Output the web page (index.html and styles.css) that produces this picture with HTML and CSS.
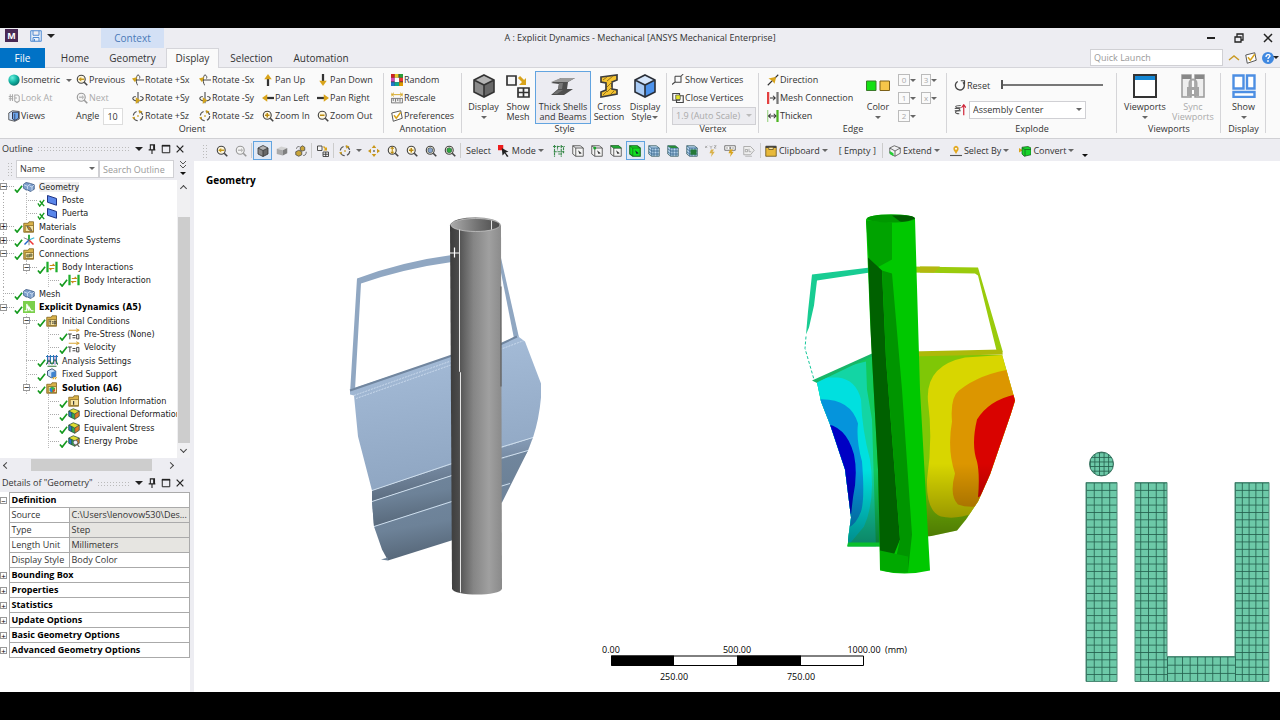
FILE: index.html
```html
<!DOCTYPE html>
<html lang="en">
<head>
<meta charset="utf-8">
<title>A : Explicit Dynamics - Mechanical</title>
<link rel="stylesheet" href="styles.css">
</head>
<body>

<svg class="defs" aria-hidden="true">
<symbol id="save" viewBox="0 0 16 16"><path d="M1 1h14v14H1zM4 1v6h8V1M4 15v-5h8v5M6 12v3" fill="#eaf2fc" stroke="#4a86d0" stroke-width="1.3"/></symbol>
<symbol id="ball" viewBox="0 0 16 16"><circle cx="8" cy="8" r="7.5" fill="url(#gBall)"/></symbol>
<symbol id="look" viewBox="0 0 16 16"><path d="M1 6h6M1 9h6M3 3v9M6 3v9M9 4h4l2 2v6l-3 2-3-2zM9 8h3" fill="none" stroke="#aaa" stroke-width="1.4"/></symbol>
<symbol id="views" viewBox="0 0 16 16"><path d="M1 4l5-3 9 1v10l-6 3-8-2z" fill="#cfe2fa" stroke="#333"/><path d="M6 3l8 0v8l-5 3-3-2z" fill="#6ba6ee" stroke="#223"/><path d="M6 3v9M9 5v9" stroke="#334"/></symbol>
<symbol id="mag" viewBox="0 0 16 16"><circle cx="7" cy="7" r="5.3" fill="#fdf6df" stroke="#444" stroke-width="1.5"/><path d="M11 11l4 4" stroke="#444" stroke-width="2.2"/></symbol>
<symbol id="magLeft" viewBox="0 0 16 16"><use href="#mag"/><path d="M3 7l4-3v2h4v2H7v2z" fill="#c79a1c"/></symbol>
<symbol id="magOff" viewBox="0 0 16 16"><circle cx="7" cy="7" r="5.3" fill="#f4f4f4" stroke="#999" stroke-width="1.5"/><path d="M11 11l4 4" stroke="#999" stroke-width="2.2"/><path d="M4 6h4V4l3 3-3 3V8H4z" fill="#bbb"/></symbol>
<symbol id="magPlus" viewBox="0 0 16 16"><use href="#mag"/><path d="M7 4v6M4 7h6" stroke="#b98a10" stroke-width="2"/></symbol>
<symbol id="magMinus" viewBox="0 0 16 16"><use href="#mag"/><path d="M4 7h6" stroke="#b98a10" stroke-width="2"/></symbol>
<symbol id="magFit" viewBox="0 0 16 16"><use href="#mag"/><path d="M7 3v8M5 5l2-2 2 2M5 9l2 2 2-2" fill="none" stroke="#b98a10" stroke-width="1.4"/></symbol>
<symbol id="magBlue" viewBox="0 0 16 16"><use href="#mag"/><path d="M4 5l3-1.500 3 1.500v4l-3 1.500L4 9z" fill="#8aa4cc" stroke="#456"/></symbol>
<symbol id="magGreen" viewBox="0 0 16 16"><use href="#mag"/><path d="M4 5l3-1.500 3 1.500v4l-3 1.500L4 9z" fill="#2faa3a" stroke="#365"/></symbol>
<symbol id="rotX" viewBox="0 0 16 16"><path d="M8 1c-3 1-3 13 0 14M8 1c2 1 3 3 2 5" fill="none" stroke="#444" stroke-width="1.3"/><path d="M3 8h13" stroke="#444" stroke-width="1.3"/><path d="M0 6l7-2-3 7z" fill="#d3a41c"/></symbol>
<symbol id="rotY" viewBox="0 0 16 16"><path d="M8 0v15M1 8c0 5 14 5 14 0-1-2-3-2-4-2M1 8c1-2 2-2 4-2" fill="none" stroke="#444" stroke-width="1.4"/><path d="M5 7l6 4-6 5z" fill="#d3a41c"/></symbol>
<symbol id="rotZ" viewBox="0 0 16 16"><circle cx="8" cy="8" r="6.300" fill="none" stroke="#555" stroke-width="1.5" stroke-dasharray="7 3"/><path d="M9 0l5 2-4 3zM7 7h2v2H7zM0 10l4-1-1 4z" fill="#c79a1c"/></symbol>
<symbol id="up" viewBox="0 0 16 16"><path d="M6.500 6h3v10h-3z" fill="#333"/><path d="M8 0l5 7H3z" fill="#d9a41b"/></symbol>
<symbol id="down" viewBox="0 0 16 16"><path d="M6.500 0h3v10h-3z" fill="#333"/><path d="M8 16l5-7H3z" fill="#d9a41b"/></symbol>
<symbol id="left" viewBox="0 0 16 16"><path d="M6 6.500h10v3H6z" fill="#333"/><path d="M0 8l7-5v10z" fill="#d9a41b"/></symbol>
<symbol id="right" viewBox="0 0 16 16"><path d="M0 6.500h10v3H0z" fill="#333"/><path d="M16 8l-7-5v10z" fill="#d9a41b"/></symbol>
<symbol id="random" viewBox="0 0 16 16"><path d="M0 0h16v16H0z" fill="#333"/><path d="M0 0h5v5H0z" fill="#c22"/><path d="M5 0h5v5H5z" fill="#e9c92a"/><path d="M11 0h5v5h-5z" fill="#2a9d3a"/><path d="M0 5h5v5H0z" fill="#d44bb4"/><path d="M5 5h6v6H5z" fill="#fff"/><path d="M11 5h5v5h-5z" fill="#e33"/><path d="M0 11h5v5H0z" fill="#27c"/><path d="M5 11h6v5H5z" fill="#1a8"/><path d="M11 11h5v5h-5z" fill="#d90"/></symbol>
<symbol id="rescale" viewBox="0 0 16 16"><path d="M0 1v5M16 1v5M1 3.500h14M4 1L1 3.500 4 6M12 1l3 2.500L12 6" fill="none" stroke="#d3a41c" stroke-width="1.2"/><path d="M.5 8.500h15v6H.5zM3 9v3M6 9v4M9 9v3M12 9v4" fill="#eee" stroke="#555"/></symbol>
<symbol id="prefs" viewBox="0 0 16 16"><path d="M1 4l12-3 2 10-12 4z" fill="#fff" stroke="#555" stroke-width="1.3"/><path d="M4 7l3 4 6-8" fill="none" stroke="#d9a41b" stroke-width="2"/></symbol>
<symbol id="cubeGrey" viewBox="0 0 24 24"><path d="M12 1l10 5-10 5L2 6z" fill="#b4b4b4"/><path d="M2 6l10 5v12L2 18z" fill="#8a8a8a"/><path d="M22 6l-10 5v12l10-5z" fill="#686868"/><path d="M12 1l10 5v12l-10 5-10-5V6zM2 6l10 5 10-5M12 11v12" fill="none" stroke="#333" stroke-width="1.6"/></symbol>
<symbol id="cubeBlue" viewBox="0 0 24 24"><path d="M12 1l10 5-10 5L2 6z" fill="#d5e6fb"/><path d="M2 6l10 5v12L2 18z" fill="#a9cbf5"/><path d="M22 6l-10 5v12l10-5z" fill="#4d93ec"/><path d="M12 1l10 5v12l-10 5-10-5V6zM2 6l10 5 10-5M12 11v12" fill="none" stroke="#2a2f38" stroke-width="1.6"/></symbol>
<symbol id="mesh" viewBox="0 0 24 24"><path d="M1 2h9v9H1zM12 14h11v9H12zM17.500 14v9M12 18.500h11" fill="#f6f6f6" stroke="#333" stroke-width="1.7"/><path d="M13 3l5 5" stroke="#d9a41b" stroke-width="3"/><path d="M20 4v7h-7z" fill="#d9a41b"/></symbol>
<symbol id="beam" viewBox="0 0 24 24"><path d="M0 9l10-5h14l-7 4-1 7h6l-9 6H0l7-6 1-5z" fill="#4e4e4e"/><path d="M0 8l10-4h14l-7 4z" fill="#9a9a9a"/><path d="M8 9h4l-1 6H7z" fill="#777"/><path d="M7 16h5l-6 4H2z" fill="#707070"/></symbol>
<symbol id="ibeam" viewBox="0 0 24 24"><path d="M4 3l16-2v5l-5 2v7l5 1v4L4 23v-5l5-2V9L4 8z" fill="#f5c330" stroke="#3d3d3d" stroke-width="1.7"/><path d="M6 6l4-3M10 7l6-5M10 13l5-5M10 18l5-5M6 21l4-4M13 21l4-4" stroke="#96741a"/></symbol>
<symbol id="vert" viewBox="0 0 16 16"><path d="M4 3h8v8H4M4 3v8M0 14l5-4M12 3l3-3" fill="none" stroke="#444" stroke-width="1.4"/></symbol>
<symbol id="closeV" viewBox="0 0 16 16"><path d="M1 2h9v9H1zM6 5h9v9H6z" fill="none" stroke="#444" stroke-width="1.5"/><path d="M5 4h6v6H5z" fill="#e5e622" stroke="#555"/></symbol>
<symbol id="dir" viewBox="0 0 16 16"><path d="M1 15L15 1" stroke="#333" stroke-width="1.5"/><path d="M2 6l9-2 1 1-2 8-3-4z" fill="#d9a41b"/></symbol>
<symbol id="conn" viewBox="0 0 16 16"><path d="M1.500 0v16" stroke="#e34040" stroke-width="3"/><path d="M14 0v16" stroke="#777" stroke-width="3"/><path d="M4 8h7M8 5l3 3-3 3" fill="none" stroke="#333" stroke-width="1.4"/></symbol>
<symbol id="thick" viewBox="0 0 16 16"><path d="M1 0v16" stroke="#6cc04a"/><path d="M14 0v16" stroke="#4eb522" stroke-width="3"/><path d="M2 8h9M5 5L2 8l3 3M9 5l3 3-3 3" fill="none" stroke="#333" stroke-width="1.4"/></symbol>
<symbol id="reset" viewBox="0 0 16 16"><path d="M5 2a6 6 0 1 0 7 1" fill="none" stroke="#444" stroke-width="1.8"/><path d="M9 1h5v5" fill="none" stroke="#444" stroke-width="1.6"/></symbol>
<symbol id="explode" viewBox="0 0 16 16"><path d="M9 2c-9 0-9 3 0 3M1 6c9-1 9 3 0 3M9 9c-9 0-9 4-2 4" fill="none" stroke="#555" stroke-width="1.4"/><path d="M13 2v13M10 5l3-4 3 4" fill="none" stroke="#cf2438" stroke-width="1.6"/></symbol>
<symbol id="viewports" viewBox="0 0 24 24"><path d="M1 1h22v22H1z" fill="#fff" stroke="#333" stroke-width="2"/><path d="M2 2h20v4H2z" fill="#1487d4"/></symbol>
<symbol id="sync" viewBox="0 0 24 24"><path d="M1 1h9v22H1zM14 1h9v22h-9z" fill="#eee" stroke="#999" stroke-width="1.5"/><path d="M1 1h9v4H1zM14 1h9v4h-9z" fill="#888"/><path d="M6 13h12v9H6z" fill="#a5a5a5"/><path d="M8.500 13V9a3.500 3.500 0 0 1 7 0v4" fill="none" stroke="#a5a5a5" stroke-width="2"/><path d="M12 16v4" stroke="#fff" stroke-width="2"/></symbol>
<symbol id="show" viewBox="0 0 24 24"><path d="M1.500 1.500h10v13h-10zM15 1.500h7.500v13H15zM1.500 18h21v5h-21z" fill="#fff" stroke="#4d8fe3" stroke-width="2.4"/></symbol>
<symbol id="swatch" viewBox="0 0 24 24"><path d="M.5 7h9.500v9.500H.5z" fill="#13e013" stroke="#3a7a2a"/><path d="M14 7h9.500v9.500H14z" fill="#f5c64a" stroke="#7c6018"/></symbol>
<symbol id="check" viewBox="0 0 10 10"><path d="M1 6l2.500 3L9 2" fill="none" stroke="#149a1e" stroke-width="1.8"/></symbol>
<symbol id="cross" viewBox="0 0 10 10"><path d="M1 6l2 3 5-7M3 3l5 6" fill="none" stroke="#149a1e" stroke-width="1.5"/></symbol>
<symbol id="geom" viewBox="0 0 16 16"><path d="M0 5l4-3 5 1 6 2v6l-5 3-4-2H4l-4-3z" fill="#7e9fcb" stroke="#33507c"/><path d="M1 5l5 2v4M6 7l4-3M9 7l3 1v5M12 8l3-3" fill="none" stroke="#dce8f8"/></symbol>
<symbol id="surf" viewBox="0 0 16 16"><path d="M2 2l12 4v9L2 11z" fill="#5a86ea" stroke="#1c2f80" stroke-width="1.3"/></symbol>
<symbol id="folder" viewBox="0 0 16 16"><path d="M1 3h6l1-2h6v14H1z" fill="#d9b24a" stroke="#7b5d15"/><path d="M3 6h11v8H3z" fill="#f6e3a0" stroke="#8a6a20"/></symbol>
<symbol id="mat" viewBox="0 0 16 16"><use href="#folder"/><path d="M5 7l4 1 3 5-4-1z" fill="#c88a20" stroke="#555"/></symbol>
<symbol id="conns" viewBox="0 0 16 16"><use href="#folder"/><path d="M5 9h4v3H5zM9 8h3v3H9z" fill="#aaa14a" stroke="#665"/></symbol>
<symbol id="init" viewBox="0 0 16 16"><use href="#folder"/><path d="M4 8h3M5.500 8v5M8 9h2M8 11h2M11 8h2v4h-2z" fill="none" stroke="#222"/></symbol>
<symbol id="sol" viewBox="0 0 16 16"><use href="#folder"/><path d="M5 8l3-2 4 2v4l-4 2-3-2z" fill="#35b04b"/><path d="M5 8l3 1v5l-3-2z" fill="#2c7be0"/><path d="M9 11l3-2v3l-3 2z" fill="#e04a2a"/></symbol>
<symbol id="info" viewBox="0 0 16 16"><use href="#folder"/><path d="M7.500 8v5" stroke="#333" stroke-width="1.500"/></symbol>
<symbol id="coord" viewBox="0 0 16 16"><path d="M8 8V1" stroke="#22a83a" stroke-width="2.500"/><path d="M8 8l7-3" stroke="#36b8d8" stroke-width="1.500"/><path d="M8 8l6 6" stroke="#e33" stroke-width="2"/><path d="M8 8l-6 6" stroke="#26c" stroke-width="2"/><path d="M8 8L1 5M8 8v7" stroke="#666"/></symbol>
<symbol id="body" viewBox="0 0 16 16"><path d="M2 1v14M14 1v14" stroke="#1eae2c" stroke-width="3"/><path d="M5 6h6L9 4M11 10H5l2 2" fill="none" stroke="#c98a1a" stroke-width="1.500"/></symbol>
<symbol id="explicit" viewBox="0 0 16 16"><path d="M0 0h16v16H0z" fill="#7bd04c"/><path d="M2 13h3V4l3 9V8l3 5h3" fill="none" stroke="#fff" stroke-width="1.500"/></symbol>
<symbol id="t0" viewBox="0 0 16 16"><path d="M1 3h13M11 1l4 2-4 2" fill="none" stroke="#d19a20" stroke-width="1.200"/><path d="M0 8h5M2.500 8v7M6 10h4M6 13h4M11.500 8.500h3v6h-3z" fill="none" stroke="#333" stroke-width="1.200"/></symbol>
<symbol id="analysis" viewBox="0 0 16 16"><path d="M0 2h16M2 0v12M6 0v12M10 0v12M14 0v12" stroke="#2878b8" stroke-width="1.400"/><path d="M0 13l4-6 4 5 4-6 4 7M2 15h12" fill="none" stroke="#347a3a" stroke-width="1.400"/><path d="M4 1v12M12 1v12" stroke="#8a53b0"/></symbol>
<symbol id="fixed" viewBox="0 0 16 16"><path d="M2 4l6-3 5 3v7l-6 2-5-3z" fill="#c8e0fa" stroke="#33466a" stroke-width="1.200"/><path d="M7 6l6-2v7l-6 2z" fill="#3f83cf"/><path d="M9 15l2-3M12 15l2-3" stroke="#d9a41b" stroke-width="1.500"/></symbol>
<symbol id="result" viewBox="0 0 16 16"><path d="M1 4l6-3 8 3-6 4z" fill="#dfdc30"/><path d="M1 4l8 4v7l-8-4z" fill="#2eae4c"/><path d="M15 4L9 8v7l6-4z" fill="#de7a25"/><path d="M1 4l4 2v7l-4-2z" fill="#2776cc"/><path d="M1 4l6-3 8 3v7l-6 4-8-4zM1 4l8 4 6-4M9 8v7M5 6v7" fill="none" stroke="#2b4d3a"/></symbol>
<symbol id="probe" viewBox="0 0 16 16"><use href="#result"/><circle cx="10" cy="10" r="3" fill="#eef" stroke="#555"/><path d="M12 12l3 4" stroke="#555" stroke-width="1.500"/></symbol>
<symbol id="box" viewBox="0 0 16 16"><path d="M1 5l6-3 8 2-6 3z" fill="#d2d2d2"/><path d="M1 5l8 2v7l-8-2z" fill="#aaa"/><path d="M15 4L9 7v7l6-3z" fill="#808080"/></symbol>
<symbol id="swap" viewBox="0 0 16 16"><path d="M1 9l4-2 4 2v4l-4 2-4-2zM7 3l3-2 3 2v4l-3 1-3-1z" fill="#c9a53a" stroke="#444"/><path d="M2 5c0-3 3-3 4-3M15 9c0 4-2 5-4 5" fill="none" stroke="#444"/></symbol>
<symbol id="pan" viewBox="0 0 16 16"><path d="M8 0l3 4H5zM8 16l3-4H5zM0 8l4-3v6zM16 8l-4-3v6z" fill="#c9971a"/><path d="M7 7h2v2H7z" fill="#444"/></symbol>
<symbol id="cursor" viewBox="0 0 16 16"><path d="M0 0h7v7H0z" fill="#ee1c1c"/><path d="M5 4l9 5-4 1 4 5-2 1-3-5-3 3z" fill="#222"/></symbol>
<symbol id="pts" viewBox="0 0 16 16"><path d="M2 0v16M6 1v6M11 0v16M0 2h16M1 9h15M7 12h3M14 3v8" fill="none" stroke="#3b8a4c" stroke-width="1.500" stroke-dasharray="4 1"/></symbol>
<symbol id="wire" viewBox="0 0 16 16"><path d="M1 1h10l4 3v11H5L1 12zM1 1l4 3h10M5 4v11" fill="#f5f5f5" stroke="#555" stroke-width="1.200"/><path d="M8 7l5 4-3 1z" fill="#333"/></symbol>
<symbol id="selV" viewBox="0 0 16 16"><use href="#wire"/><circle cx="5" cy="4" r="2" fill="#19a52a"/></symbol>
<symbol id="selE" viewBox="0 0 16 16"><use href="#wire"/><path d="M1 1l4 3h10l-3-3z" fill="#22b936" stroke="#1a6d26"/></symbol>
<symbol id="selB" viewBox="0 0 16 16"><path d="M1 1h10l4 3v11H5L1 12z" fill="#10e022" stroke="#186820" stroke-width="1.400"/><path d="M1 1l4 3h10M5 4v11" fill="none" stroke="#186820"/><path d="M8 7l5 4-3 1z" fill="#123"/></symbol>
<symbol id="grid" viewBox="0 0 16 16"><path d="M1 1h10l4 3v11H5L1 12z" fill="#b9d7f0" stroke="#355"/><path d="M1 1l4 3h10M5 4v11M8 4v11M12 4v11M5 8h10M5 12h10M1 5l4 3M1 9l4 3" fill="none" stroke="#2c5c84"/></symbol>
<symbol id="gridT" viewBox="0 0 16 16"><use href="#grid"/><path d="M1 1h10l4 3H5z" fill="#278a38"/></symbol>
<symbol id="gridF" viewBox="0 0 16 16"><use href="#grid"/><path d="M6 6h8v7H6z" fill="#247a38"/></symbol>
<symbol id="xyz" viewBox="0 0 16 16"><path d="M0 1l3 3M3 1L0 4M6 1l2 2 2-2M8 3v2M12 1h3l-3 3h3" fill="none" stroke="#999"/><path d="M8 6l-2 5h3l-1 5 5-7h-3l2-3z" fill="#d9b14a"/></symbol>
<symbol id="tag" viewBox="0 0 16 16"><path d="M1 1h14v6H1zM4 3v2M7 3h2v2H7M12 3v2" fill="#fff" stroke="#666" stroke-width="1.200"/><path d="M8 6l-2 5h3l-1 5 5-7h-3l2-3z" fill="#d9a41b"/></symbol>
<symbol id="label" viewBox="0 0 16 16"><path d="M1 2h9l5 5-5 6H1zM3 6h3v3H3zM8 5v4h3" fill="#eee" stroke="#999"/><path d="M3 15h9" stroke="#aaa"/></symbol>
<symbol id="clip" viewBox="0 0 16 16"><path d="M1 2h14v13H1z" fill="#e8b93a" stroke="#5d4a14"/><path d="M1 1h14v3H1z" fill="#444"/><path d="M5 3h6v3H5z" fill="#f8e9b8" stroke="#5d4a14"/></symbol>
<symbol id="extend" viewBox="0 0 16 16"><path d="M1 4l6-3 8 3v7l-7 4-7-4zM1 4l7 4 7-4M8 8v7" fill="#f3f3f3" stroke="#444"/><path d="M1 8l5 3v4l-5-3z" fill="#23cf34"/></symbol>
<symbol id="pin" viewBox="0 0 16 16"><path d="M8 1a4 4 0 0 1 3 6l-3 5-3-5a4 4 0 0 1 3-6z" fill="#e3a922"/><circle cx="8" cy="5" r="1.300" fill="#fff"/><path d="M0 14h16" stroke="#555" stroke-width="1.500"/></symbol>
<symbol id="convert" viewBox="0 0 16 16"><path d="M0 4l5 3-5 3z" fill="#d9a41b"/><path d="M4 3l8-1 4 2v9l-9 2-3-3z" fill="#17d42b" stroke="#17601f"/><path d="M4 4l4 2h8M8 6v9" fill="none" stroke="#17601f"/></symbol>
<symbol id="pinH" viewBox="0 0 12 12"><path d="M4 1h5v6H4zM8 1v6M2 7h8M6 7v5" fill="none" stroke="#222" stroke-width="1.300"/></symbol>
<symbol id="max" viewBox="0 0 12 12"><path d="M1.500 2h9v8.500h-9z" fill="none" stroke="#222" stroke-width="1.200"/><path d="M1 2h10" stroke="#222" stroke-width="2"/></symbol>
<symbol id="x" viewBox="0 0 12 12"><path d="M2 2l8 8M10 2l-8 8" stroke="#222" stroke-width="1.500"/></symbol>
<symbol id="restore" viewBox="0 0 12 12"><path d="M2 5h6v5H2zM4 5V2h6v6H8" fill="none" stroke="#222" stroke-width="1.300"/></symbol>
<radialGradient id="gBall" cx=".35" cy=".3" r=".8"><stop offset="0" stop-color="#6ff0e0"/><stop offset=".5" stop-color="#12b5a4"/><stop offset="1" stop-color="#056a66"/></radialGradient>
</svg>

<div class="app">

<header class="top">
  <div class="title_bar">
    <div class="quick"><span class="logo">M</span><button aria-label="Save"><svg class="ic"><use href="#save"/></svg></button><i class="caret big"></i></div>
    <div class="ctx">Context</div>
    <div class="title">A : Explicit Dynamics - Mechanical [ANSYS Mechanical Enterprise]</div>
    <div class="win">
      <button aria-label="Minimize"><i class="dash"></i></button>
      <button aria-label="Restore"><svg class="ic"><use href="#restore"/></svg></button>
      <button aria-label="Close"><svg class="ic"><use href="#x"/></svg></button>
    </div>
  </div>
  <nav class="tabs">
    <button class="tab file">File</button>
    <button class="tab t_home">Home</button>
    <button class="tab t_geo">Geometry</button>
    <button class="tab on">Display</button>
    <button class="tab t_sel">Selection</button>
    <button class="tab t_auto">Automation</button>
    <div class="launch">
      <input type="text" placeholder="Quick Launch" aria-label="Quick Launch">
      <svg class="ic" viewBox="0 0 12 12"><path d="M1 8l5-4 5 4" fill="none" stroke="#c99a25" stroke-width="1.500"/></svg>
      <svg class="ic"><use href="#prefs"/></svg>
      <svg class="ic" viewBox="0 0 12 12"><circle cx="6" cy="6" r="6" fill="#3f88e0"/><path d="M4 5c0-3 4-3 4-1 0 1-2 1-2 3M6 8v2" fill="none" stroke="#fff" stroke-width="1.300"/></svg><i class="caret"></i>
    </div>
  </nav>
</header>

<div class="ribbon">
  <section class="grp g_orient">
    <div class="cmds">
      <div class="col">
        <button class="cmd"><svg class="ic"><use href="#ball"/></svg>Isometric<i class="caret far"></i></button>
        <button class="cmd off"><svg class="ic"><use href="#look"/></svg>Look At</button>
        <button class="cmd"><svg class="ic"><use href="#views"/></svg>Views</button>
      </div>
      <div class="col">
        <button class="cmd"><svg class="ic"><use href="#magLeft"/></svg>Previous</button>
        <button class="cmd off"><svg class="ic"><use href="#magOff"/></svg>Next</button>
        <label class="cmd angle">Angle<input type="text" value="10"></label>
      </div>
      <div class="col">
        <button class="cmd"><svg class="ic"><use href="#rotX"/></svg>Rotate +Sx</button>
        <button class="cmd"><svg class="ic"><use href="#rotY"/></svg>Rotate +Sy</button>
        <button class="cmd"><svg class="ic"><use href="#rotZ"/></svg>Rotate +Sz</button>
      </div>
      <div class="col">
        <button class="cmd"><svg class="ic"><use href="#rotX"/></svg>Rotate -Sx</button>
        <button class="cmd"><svg class="ic"><use href="#rotY"/></svg>Rotate -Sy</button>
        <button class="cmd"><svg class="ic"><use href="#rotZ"/></svg>Rotate -Sz</button>
      </div>
      <div class="col">
        <button class="cmd"><svg class="ic"><use href="#up"/></svg>Pan Up</button>
        <button class="cmd"><svg class="ic"><use href="#left"/></svg>Pan Left</button>
        <button class="cmd"><svg class="ic"><use href="#magPlus"/></svg>Zoom In</button>
      </div>
      <div class="col">
        <button class="cmd"><svg class="ic"><use href="#down"/></svg>Pan Down</button>
        <button class="cmd"><svg class="ic"><use href="#right"/></svg>Pan Right</button>
        <button class="cmd"><svg class="ic"><use href="#magMinus"/></svg>Zoom Out</button>
      </div>
    </div>
    <div class="cap">Orient</div>
  </section>

  <section class="grp g_annot">
    <div class="cmds"><div class="col">
      <button class="cmd"><svg class="ic"><use href="#random"/></svg>Random</button>
      <button class="cmd"><svg class="ic"><use href="#rescale"/></svg>Rescale</button>
      <button class="cmd"><svg class="ic"><use href="#prefs"/></svg>Preferences</button>
    </div></div>
    <div class="cap">Annotation</div>
  </section>

  <section class="grp g_style">
    <div class="cmds">
      <button class="big_cmd"><svg class="ic24"><use href="#cubeGrey"/></svg><span>Display</span><i class="caret"></i></button>
      <button class="big_cmd"><svg class="ic24"><use href="#mesh"/></svg><span>Show<br>Mesh</span></button>
      <button class="big_cmd sel"><svg class="ic24"><use href="#beam"/></svg><span>Thick Shells<br>and Beams</span></button>
      <button class="big_cmd"><svg class="ic24"><use href="#ibeam"/></svg><span>Cross<br>Section</span></button>
      <button class="big_cmd"><svg class="ic24"><use href="#cubeBlue"/></svg><span>Display<br>Style<i class="caret"></i></span></button>
    </div>
    <div class="cap">Style</div>
  </section>

  <section class="grp g_vertex">
    <div class="cmds"><div class="col">
      <button class="cmd"><svg class="ic"><use href="#vert"/></svg>Show Vertices</button>
      <button class="cmd"><svg class="ic"><use href="#closeV"/></svg>Close Vertices</button>
      <div class="drop off"><select disabled aria-label="Vertex scale"><option>1.9 (Auto Scale)</option></select></div>
    </div></div>
    <div class="cap">Vertex</div>
  </section>

  <section class="grp g_edge">
    <div class="cmds">
      <div class="col">
        <button class="cmd"><svg class="ic"><use href="#dir"/></svg>Direction</button>
        <button class="cmd"><svg class="ic"><use href="#conn"/></svg>Mesh Connection</button>
        <button class="cmd"><svg class="ic"><use href="#thick"/></svg>Thicken</button>
      </div>
      <button class="big_cmd"><svg class="ic24"><use href="#swatch"/></svg><span>Color</span><i class="caret"></i></button>
      <div class="minis">
        <button><b>0</b><i class="caret"></i></button><button><b>3</b><i class="caret"></i></button>
        <button><b>1</b><i class="caret"></i></button><button><b>x</b><i class="caret"></i></button>
        <button><b>2</b><i class="caret"></i></button>
      </div>
    </div>
    <div class="cap">Edge</div>
  </section>

  <section class="grp g_explode">
    <div class="cmds">
      <div class="ex_row"><button class="cmd"><svg class="ic"><use href="#reset"/></svg>Reset</button><input type="range" value="0" aria-label="Explode factor"></div>
      <div class="ex_row"><svg class="ic"><use href="#explode"/></svg><div class="drop"><select aria-label="Explode origin"><option>Assembly Center</option></select></div></div>
    </div>
    <div class="cap">Explode</div>
  </section>

  <section class="grp g_views">
    <div class="cmds">
      <button class="big_cmd"><svg class="ic24"><use href="#viewports"/></svg><span>Viewports</span><i class="caret"></i></button>
      <button class="big_cmd off"><svg class="ic24"><use href="#sync"/></svg><span>Sync<br>Viewports</span></button>
    </div>
    <div class="cap">Viewports</div>
  </section>

  <section class="grp g_show">
    <div class="cmds"><button class="big_cmd"><svg class="ic24"><use href="#show"/></svg><span>Show</span><i class="caret"></i></button></div>
    <div class="cap">Display</div>
  </section>
</div>

<div class="main">

<aside class="side">
  <div class="pane_hdr"><span>Outline</span><i class="grip"></i><i class="caret big"></i><svg class="ic"><use href="#pinH"/></svg><svg class="ic"><use href="#max"/></svg><svg class="ic"><use href="#x"/></svg></div>
  <div class="filter">
    <i class="grip_v"></i>
    <div class="drop"><select aria-label="Filter by"><option>Name</option></select></div>
    <input type="text" placeholder="Search Outline" aria-label="Search Outline">
    <svg class="more" viewBox="0 0 10 18"><path d="M2 1l3 3 3-3M2 5l3 3 3-3" fill="none" stroke="#555"/><path d="M2 12h6l-3 3z" fill="#111"/></svg>
  </div>
  <div class="outline">
    <ul class="tree">
      <li class="root"><button class="tog">−</button><i class="ln"></i><svg class="ck"><use href="#check"/></svg><svg class="ti"><use href="#geom"/></svg><span class="hl">Geometry</span></li>
      <li class="root l1 leaf"><i class="ln"></i><svg class="ck"><use href="#cross"/></svg><svg class="ti"><use href="#surf"/></svg><span>Poste</span></li>
      <li class="root l1 leaf"><i class="ln"></i><svg class="ck"><use href="#cross"/></svg><svg class="ti"><use href="#surf"/></svg><span>Puerta</span></li>
      <li class="root"><button class="tog">+</button><i class="ln"></i><svg class="ck"><use href="#check"/></svg><svg class="ti"><use href="#mat"/></svg><span>Materials</span></li>
      <li class="root"><button class="tog">+</button><i class="ln"></i><svg class="ck"><use href="#check"/></svg><svg class="ti"><use href="#coord"/></svg><span>Coordinate Systems</span></li>
      <li class="root"><button class="tog">−</button><i class="ln"></i><svg class="ck"><use href="#check"/></svg><svg class="ti"><use href="#conns"/></svg><span>Connections</span></li>
      <li class="root l1"><button class="tog">−</button><i class="ln"></i><svg class="ck"><use href="#check"/></svg><svg class="ti"><use href="#body"/></svg><span>Body Interactions</span></li>
      <li class="root l2 leaf"><i class="ln"></i><svg class="ck"><use href="#check"/></svg><svg class="ti"><use href="#body"/></svg><span>Body Interaction</span></li>
      <li class="root leaf"><i class="ln"></i><svg class="ck"><use href="#check"/></svg><svg class="ti"><use href="#geom"/></svg><span>Mesh</span></li>
      <li class="root"><button class="tog">−</button><i class="ln"></i><svg class="ck"><use href="#check"/></svg><svg class="ti"><use href="#explicit"/></svg><span class="b">Explicit Dynamics (A5)</span></li>
      <li class="l1"><button class="tog">−</button><i class="ln"></i><svg class="ck"><use href="#check"/></svg><svg class="ti"><use href="#init"/></svg><span>Initial Conditions</span></li>
      <li class="l2 leaf thru"><i class="ln"></i><svg class="ck"><use href="#check"/></svg><svg class="ti"><use href="#t0"/></svg><span>Pre-Stress (None)</span></li>
      <li class="l2 leaf thru"><i class="ln"></i><svg class="ck"><use href="#check"/></svg><svg class="ti"><use href="#t0"/></svg><span>Velocity</span></li>
      <li class="l1 leaf"><i class="ln"></i><svg class="ck"><use href="#check"/></svg><svg class="ti"><use href="#analysis"/></svg><span>Analysis Settings</span></li>
      <li class="l1 leaf"><i class="ln"></i><svg class="ck"><use href="#check"/></svg><svg class="ti"><use href="#fixed"/></svg><span>Fixed Support</span></li>
      <li class="l1"><button class="tog">−</button><i class="ln"></i><svg class="ck"><use href="#check"/></svg><svg class="ti"><use href="#sol"/></svg><span class="b">Solution (A6)</span></li>
      <li class="l2 leaf"><i class="ln"></i><svg class="ck"><use href="#check"/></svg><svg class="ti"><use href="#info"/></svg><span>Solution Information</span></li>
      <li class="l2 leaf"><i class="ln"></i><svg class="ck"><use href="#check"/></svg><svg class="ti"><use href="#result"/></svg><span>Directional Deformation</span></li>
      <li class="l2 leaf"><i class="ln"></i><svg class="ck"><use href="#check"/></svg><svg class="ti"><use href="#result"/></svg><span>Equivalent Stress</span></li>
      <li class="l2 leaf"><i class="ln"></i><svg class="ck"><use href="#check"/></svg><svg class="ti"><use href="#probe"/></svg><span>Energy Probe</span></li>
    </ul>
    <div class="vbar"><i class="chev u"></i><i class="thumb"></i><i class="chev d"></i></div>
  </div>
  <div class="hbar"><i class="chev l"></i><i class="thumb"></i><i class="chev r"></i></div>

  <div class="pane_hdr"><span>Details of "Geometry"</span><i class="grip"></i><i class="caret big"></i><svg class="ic"><use href="#pinH"/></svg><svg class="ic"><use href="#max"/></svg><svg class="ic"><use href="#x"/></svg></div>
  <table class="props">
    <colgroup><col class="c_gut"><col class="c_key"><col></colgroup>
    <tr><td class="gut"><button class="tog">−</button></td><th colspan="2">Definition</th></tr>
    <tr><td class="gut"></td><td>Source</td><td class="ro">C:\Users\lenovow530\Des...</td></tr>
    <tr><td class="gut"></td><td>Type</td><td class="ro">Step</td></tr>
    <tr><td class="gut"></td><td>Length Unit</td><td class="ro">Millimeters</td></tr>
    <tr><td class="gut"></td><td>Display Style</td><td>Body Color</td></tr>
    <tr><td class="gut"><button class="tog">+</button></td><th colspan="2">Bounding Box</th></tr>
    <tr><td class="gut"><button class="tog">+</button></td><th colspan="2">Properties</th></tr>
    <tr><td class="gut"><button class="tog">+</button></td><th colspan="2">Statistics</th></tr>
    <tr><td class="gut"><button class="tog">+</button></td><th colspan="2">Update Options</th></tr>
    <tr><td class="gut"><button class="tog">+</button></td><th colspan="2">Basic Geometry Options</th></tr>
    <tr><td class="gut"><button class="tog">+</button></td><th colspan="2">Advanced Geometry Options</th></tr>
  </table>
</aside>

<div class="work">
  <div class="tools">
    <i class="grip_v"></i>
    <button><svg class="ic"><use href="#magLeft"/></svg></button>
    <button><svg class="ic"><use href="#magOff"/></svg></button>
    <i class="sep"></i>
    <button class="sel"><svg class="ic"><use href="#cubeGrey"/></svg></button>
    <button><svg class="ic"><use href="#box"/></svg></button>
    <button><svg class="ic"><use href="#swap"/></svg></button>
    <i class="sep"></i>
    <button><svg class="ic"><use href="#mesh"/></svg></button>
    <i class="sep"></i>
    <button><svg class="ic"><use href="#rotZ"/></svg></button>
    <i class="caret mid"></i>
    <button><svg class="ic"><use href="#pan"/></svg></button>
    <button><svg class="ic"><use href="#magFit"/></svg></button>
    <button><svg class="ic"><use href="#magPlus"/></svg></button>
    <button><svg class="ic"><use href="#magBlue"/></svg></button>
    <button><svg class="ic"><use href="#magGreen"/></svg></button>
    <i class="sep"></i>
    <span class="t_select">Select</span>
    <button class="txt t_mode"><svg class="ic"><use href="#cursor"/></svg>Mode<i class="caret"></i></button>
    <button><svg class="ic"><use href="#pts"/></svg></button>
    <button><svg class="ic"><use href="#wire"/></svg></button>
    <button><svg class="ic"><use href="#selV"/></svg></button>
    <button><svg class="ic"><use href="#selE"/></svg></button>
    <button class="sel"><svg class="ic"><use href="#selB"/></svg></button>
    <button><svg class="ic"><use href="#grid"/></svg></button>
    <button><svg class="ic"><use href="#gridT"/></svg></button>
    <button><svg class="ic"><use href="#gridF"/></svg></button>
    <button><svg class="ic"><use href="#xyz"/></svg></button>
    <button><svg class="ic"><use href="#tag"/></svg></button>
    <button><svg class="ic"><use href="#label"/></svg></button>
    <i class="sep"></i>
    <button class="txt t_clip"><svg class="ic"><use href="#clip"/></svg>Clipboard<i class="caret"></i></button>
    <span class="t_empty">[ Empty ]</span>
    <i class="sep"></i>
    <button class="txt t_ext"><svg class="ic"><use href="#extend"/></svg>Extend<i class="caret"></i></button>
    <button class="txt t_by"><svg class="ic"><use href="#pin"/></svg>Select By<i class="caret"></i></button>
    <button class="txt t_conv"><svg class="ic"><use href="#convert"/></svg>Convert<i class="caret"></i></button>
    <i class="caret over"></i>
  </div>

  <div class="view">
    <h1>Geometry</h1>
    <svg class="scene" viewBox="194 162 1086 530">
      <defs>
        <linearGradient id="gPole"><stop offset="0" stop-color="#3c3c3c"/><stop offset=".16" stop-color="#4a4a4a"/><stop offset=".2" stop-color="#565656"/><stop offset=".45" stop-color="#858585"/><stop offset=".75" stop-color="#a0a0a0"/><stop offset="1" stop-color="#8a8a8a"/></linearGradient>
        <linearGradient id="gHole"><stop offset="0" stop-color="#aaa"/><stop offset=".6" stop-color="#6c6c6c"/><stop offset="1" stop-color="#4a4a4a"/></linearGradient>
        <linearGradient id="gDoor" x1=".4" y1="0" x2=".6" y2="1"><stop offset="0" stop-color="#a6bdd9"/><stop offset="1" stop-color="#8da4c0"/></linearGradient>
        <linearGradient id="gFold" x1=".4" y1="0" x2=".6" y2="1"><stop offset="0" stop-color="#8ca3bf"/><stop offset="1" stop-color="#566678"/></linearGradient>
        <linearGradient id="gBot" x1=".35" y1="0" x2=".65" y2="1"><stop offset="0" stop-color="#7288a0"/><stop offset=".5" stop-color="#6d8298"/><stop offset="1" stop-color="#4e5d6d"/></linearGradient>
        <linearGradient id="gDark" x1="0" y1="0" x2="0" y2="1"><stop offset=".6" stop-color="#000" stop-opacity="0"/><stop offset="1" stop-color="#000" stop-opacity=".4"/></linearGradient>
        <clipPath id="cL"><path d="M817 383L871 357H880L890 547H848V540L851 518 845 470 830 425 821 402z"/></clipPath>
        <clipPath id="cR"><path d="M910 355H1002L1015 401 1011 414 990 475 978 502 966 520 957 531 929 537H915z"/></clipPath>
        <pattern id="pA" x="1086" y="483" width="7.750" height="7.370" patternUnits="userSpaceOnUse"><path d="M0 0h7.750v7.370H0z" fill="#6dc9a8"/><path d="M.4 0v8M0 .4h8" stroke="#235f4c" stroke-width=".9"/></pattern>
        <pattern id="pB" x="1235" y="483" width="6.800" height="7.370" patternUnits="userSpaceOnUse"><path d="M0 0h7v7.370H0z" fill="#6dc9a8"/><path d="M.4 0v8M0 .4h8" stroke="#235f4c" stroke-width=".9"/></pattern>
        <pattern id="pC" x="1167" y="657" width="7.550" height="8.200" patternUnits="userSpaceOnUse"><path d="M0 0h8v9H0z" fill="#6dc9a8"/><path d="M.4 0v9M0 .4h8" stroke="#235f4c" stroke-width=".9"/></pattern>
        <pattern id="pD" x="1099" y="462" width="4.600" height="4.600" patternUnits="userSpaceOnUse"><path d="M0 0h5v5H0z" fill="#6dc9a8"/><path d="M.4 0v5M0 .4h5" stroke="#235f4c" stroke-width=".9"/></pattern>
      </defs>

      <!-- door, CAD body -->
      <path d="M357 279Q402 262 455 255V262Q404 269 361 284L355 390 350 394z" fill="#90a7c2"/>
      <path d="M500 254L519 338 514 339 500 268z" fill="#90a7c2"/>
      <path d="M350 390L455 355 500 345 517 336 525 342 541 384V398Q539 420 533 438L455 464 372 491 358 437 354 396 350 395z" fill="url(#gDoor)"/>
      <path d="M372 491L533 438 528 451 372 502z" fill="url(#gFold)"/>
      <path d="M372 502L528 451 502 503 374 527z" fill="#6f8399"/>
      <path d="M372 502L528 451 510 482 374 527z" fill="url(#gBot)"/>
      <path d="M374 527L510 482 501 503 480 532 388 561 382 550z" fill="url(#gBot)"/>
      <path d="M381 560l7-2v3z" fill="#6d8298"/>
      <path d="M350 391L455 355M500 345l17-8" stroke="#71869f" stroke-width="2" fill="none"/>
      <path d="M354 396L455 360M500 350l24-9M356 399L455 364" stroke="#c9d9ec" stroke-dasharray="2 1" fill="none"/>
      <path d="M372 491L455 463M500 448l33-10M372 502L455 475M500 459l28-8M374 527L455 501M500 487l10-3" stroke="#cfdfee" fill="none"/>
      <!-- post -->
      <path d="M450 226C452 215 499 215 501 226L502 589C501 597 453 597 452 589z" fill="url(#gPole)"/>
      <ellipse cx="475.500" cy="225.500" rx="24.500" ry="6.500" fill="url(#gHole)" stroke="#ccc" stroke-width=".7"/>
      <path d="M459.500 230V372l1 1V593M491.500 221v9" stroke="#e6e6e6" fill="none"/>
      <path d="M501 287v100" stroke="#555"/>
      <path d="M450 253.500h9M454.500 248v10" stroke="#fff" stroke-width="1.200"/>

      <!-- door, result body -->
      <path d="M812 275L870 268V273L817 281 814 306 809 328 806 335 808 312z" fill="#18cc92"/>
      <path d="M806 337l-1 12 9 31" fill="none" stroke="#14c79a" stroke-dasharray="3 2"/>
      <path d="M812 381L872 354V366L818 384z" fill="#17b568"/>
      <path d="M910 267L978 268 1003 353H997L978 276 975 274 910 273z" fill="#9acb0c"/>
      <path d="M920 267h20l-6 6h-14z" fill="#b4b810"/>
      <g clip-path="url(#cL)">
        <path d="M800 350h90v200h-90z" fill="#12c95c"/>
        <path d="M810 380L850 366 866 362 867 390 872 420 876 550H810z" fill="#13d5a4"/>
        <path d="M810 378L838 378Q856 380 861 400Q862 430 870 460Q876 500 864 527L845 550z" fill="#00e0df"/>
        <path d="M815 400Q850 397 858 424Q856 440 862 462Q865 500 861 512Q856 526 845 530L815 450z" fill="#0594dc"/>
        <path d="M822 424Q846 425 854 455Q858 475 853 498L851 515 840 500z" fill="#0000c4"/>
        <path d="M800 350h90v200h-90z" fill="url(#gDark)"/>
      </g>
      <g clip-path="url(#cR)">
        <path d="M905 350h120v190H905z" fill="#7fc706"/>
        <path d="M1010 355L965 358Q925 366 928 402Q933 440 927 480Q926 512 941 517Q958 521 980 511L1020 440z" fill="#d8d600"/>
        <path d="M1015 369Q980 374 959 391Q950 398 952 422Q947 450 955 474Q949 496 958 505Q968 509 985 506L1025 440z" fill="#dc9600"/>
        <path d="M1020 394Q990 399 977 420Q971 445 977 462Q980 475 978 498L1020 470z" fill="#d90300"/>
        <path d="M905 350h120v190H905z" fill="url(#gDark)"/>
      </g>
      <path d="M910 352L1001 350 1003 355 910 357z" fill="#adb90a"/>
      <path d="M848 543h32v4h-33z" fill="#0abf2c"/>
      <path d="M866 220Q868 215 891 215Q913 215 915 219L920 390 930 571Q904 577 880 571L878 470 870 320z" fill="#00c800"/>
      <path d="M866 221L892 223V260L870 272z" fill="#00a300"/>
      <path d="M868 258L882 271 886 360 900 540 894 555 880 553 878 470 871 340z" fill="#006100"/>
      <path d="M882 271L892 274 902 390 912 535 908 572 893 572 900 540 886 360z" fill="#009500"/>
      <path d="M880 551l14 3 14 3v16Q890 574 880 570z" fill="#00a900"/>
      <ellipse cx="891" cy="219" rx="24" ry="4" fill="#009800"/>
      <path d="M892 216q22-1 23 3-8 4-15 3z" fill="#005c00"/>

      <!-- iu mark -->
      <circle cx="1101.500" cy="464.500" r="12" fill="url(#pD)" stroke="#235f4c" stroke-width=".8"/>
      <path d="M1086 483h31v199h-31z" fill="url(#pA)"/>
      <path d="M1135 483h32v199h-32z" fill="url(#pA)"/>
      <path d="M1235 483h34v199h-34z" fill="url(#pB)"/>
      <path d="M1167 657h68v25h-68z" fill="url(#pC)"/>
      <path d="M1086 483h31v199h-31zM1135 483h32v174h68v-174h34v199h-134z" fill="none" stroke="#4c8a76"/>

      <!-- ruler -->
      <path d="M611.500 656.500h252v9.500h-252z" fill="#fff" stroke="#000"/>
      <path d="M611 656h63v10h-63zM737 656h64v10h-64z"/>
      <g class="scale">
        <text x="611" y="653">0.00</text><text x="737" y="653">500.00</text><text x="864" y="653">1000.00</text><text x="896" y="653">(mm)</text>
        <text x="674" y="680">250.00</text><text x="801" y="680">750.00</text>
      </g>
    </svg>
  </div>
</div>

</div>
</div>

</body>
</html>
```
FILE: styles.css
```css
* {box-sizing:border-box}
body {margin:0;background:#000;font:9px/10px "Open Sans","Noto Sans",sans-serif;color:#333;}
button, input, select {font:inherit;color:inherit;margin:0;padding:0;border:0;background:none;}
button {display:flex;align-items:center;white-space:nowrap;}
.defs {position:absolute;width:0;height:0}

.app {height:100vh;padding:28px 0;display:flex;flex-direction:column;}
.ic {width:12px;height:12px;flex:none}
.ic24 {width:24px;height:24px;flex:none}
.caret {flex:none;border:3px solid transparent;border-top-color:#666;border-bottom:0;}
.caret.big {border-width:4px 4px 0;border-top-color:#222;}

/* title + tabs */
.top {background:#ededf2}
.title_bar {display:flex;height:20px;}
.quick {display:flex;align-items:center;width:101px;padding:0 0 5px 5px;}
.logo {width:13px;height:13px;background:#4a2a55;color:#fff;font-weight:bold;line-height:13px;text-align:center;margin-right:12px;}
.quick .caret {margin-left:5px}
.ctx {width:63px;background:#d3e0f5;color:#4a7ab8;text-align:center;line-height:21px;font-size:10px;}
.title {flex:1;text-align:center;line-height:20px;padding-right:88px;}
.win {display:flex;width:76px;justify-content:space-between;padding:0 6px 0 3px;}
.dash {width:8px;height:2px;background:#222;}
.tabs {display:flex;height:20px;border-bottom:1px solid #d5d5da;}
.tab {justify-content:center;font-size:10px;height:20px;}
.tab.file {width:45px;background:#0072c6;color:#fff;}
.tab.on {width:53px;background:#fafafa;border:1px solid #d5d5da;border-bottom:0;padding-bottom:1px;}
.t_home {width:60px}
.t_geo {width:61px;padding-right:6px;}
.t_sel {width:65px}
.t_auto {width:74px}
.launch {margin-left:auto;display:flex;align-items:center;gap:5px;padding-right:1px;}
.launch input {width:133px;height:17px;background:#fff;border:1px solid #d0d0d4;padding:0 3px;}
.launch .caret {margin-left:-6px;border-top-color:#222;}
::placeholder {color:#999;opacity:1;}

/* ribbon */
.ribbon {display:flex;height:71px;flex:none;background:#fafafa;border-bottom:1px solid #d0d0d4;}
.grp {display:flex;flex-direction:column;padding-top:3px;position:relative;}
.grp::after {content:"";position:absolute;right:0;top:5px;bottom:5px;width:1px;background:#d5d5d8;}
.cmds {display:flex;height:52px;}
.cap {text-align:center;line-height:11px}
.col {display:grid;grid-template-rows:repeat(3,18px);align-content:start;}
.cmd {display:flex;align-items:center;gap:1px;white-space:nowrap;}
.off {color:#aaa}
.big_cmd {flex-direction:column;height:53px;padding-top:2px;border:1px solid transparent;}
.big_cmd span {line-height:10px;margin-top:4px;text-align:center;}
.big_cmd >.caret {margin-top:4px}
.big_cmd span .caret {display:inline-block;margin-left:1px;vertical-align:middle;}
.big_cmd.sel {background:#ececf2;border-color:#62a4e0;}

.g_orient {width:384px}
.g_orient .cmds {display:grid;grid-template-columns:68px 56px 67px 63px 55px 62px;padding-left:8px;}
.caret.far {margin-left:5px}
.angle {gap:4px}
.angle input {width:20px;height:17px;border:1px solid #ddd;background:#fff;padding-left:3px;}
.g_annot {width:78px}
.g_annot .cmds {padding-left:7px}
.g_style {width:205px;}
.g_style .cmds {display:grid;grid-template-columns:35px 34px 56px 36px 36px;padding-left:4px;}
.g_vertex {width:92px}
.g_vertex .cmds {padding-left:5px}
.g_edge {width:188px}
.g_edge .cmds {padding-left:8px}
.g_edge .big_cmd {width:28px;margin-left:5px;}
.g_edge .col {width:92px}
.minis {display:grid;grid-template-columns:23px 16px;grid-template-rows:repeat(3,18px);margin-left:6px;}
.minis b {width:12px;height:12px;border:1px solid #bbb;font-weight:normal;font-size:8px;color:#aaa;line-height:10px;}
.g_explode {width:170px}
.g_explode .cmds {flex-direction:column;padding:3px 0 0 7px;}
.ex_row {display:flex;align-items:center;height:24px;gap:3px;}
.ex_row .drop {width:117px}
input[type=range] {appearance:none;width:102px;height:9px;margin:0 0 4px 8px;background:linear-gradient(#777,#777) 0 4px/100% 2px no-repeat;}
input[type=range]::-webkit-slider-thumb {appearance:none;width:2px;height:9px;background:#555;}
.g_views {width:104px}
.g_views .cmds {padding-left:4px}
.g_views .big_cmd {width:48px}
.g_show {width:45px}
.g_show .big_cmd {width:45px}

.drop {position:relative;height:18px;background:#fff;border:1px solid #d0d0d4;}
.drop select {appearance:none;width:100%;height:100%;padding-left:3px;opacity:1;}
.drop::after {content:"";position:absolute;right:3px;top:6px;border:3px solid transparent;border-top-color:#666;border-bottom:0;pointer-events:none;}
.drop.off {background:#ececf0;width:84px;}
.drop.off::after {border-top-color:#bbb}

/* left panes */
.main {display:flex;flex:1;min-height:0;background:#ededf2;}
.side {width:190px;flex:none;display:flex;flex-direction:column;}
.work {flex:1;display:flex;flex-direction:column;margin-left:4px;min-width:0;}
.pane_hdr {display:flex;align-items:center;height:19px;flex:none;gap:4px;padding:0 5px 0 2px;}
.pane_hdr .ic {width:10px;height:10px}
.grip {flex:1;height:5px;background:radial-gradient(#bbb 30%,transparent 40%) 0 0/3px 3px;}
.grip_v {width:5px;height:14px;background:radial-gradient(#bbb 30%,transparent 40%) 0 0/3px 3px;}
.filter {display:flex;align-items:center;height:22px;flex:none;padding-left:7px;}
.filter .drop {width:83px;margin-left:4px;}
.filter input {width:75px;height:18px;background:#fff;border:1px solid #d0d0d4;padding:0 3px;}
.filter .more {width:10px;height:18px;margin-left:4px;}

.outline {display:flex;flex:none;background:#fff;}
.tree {list-style:none;margin:0 0 10px;padding:0;width:177px;height:268px;overflow:hidden;display:grid;grid-auto-rows:1fr;font-family:"DejaVu Sans Condensed","DejaVu Sans",sans-serif;color:#222;}
.tree li {display:flex;align-items:center;position:relative;white-space:nowrap;}
.tree .l1 {padding-left:23px}
.tree .l2 {padding-left:45px}
.tree .root {background:repeating-linear-gradient(#aaa 0 1px,transparent 1px 3px) 3px 0/1px 100% no-repeat;}
.tree .l1::before, .tree .l2::before {content:"";position:absolute;left:26px;top:0;bottom:0;border-left:1px dotted #bbb;}
.tree .l2::before {left:48px}
.tree .thru::after {content:"";position:absolute;left:26px;top:0;bottom:0;border-left:1px dotted #bbb;}
.tog {width:7px;height:7px;flex:none;border:1px solid #999;background:#fff;justify-content:center;line-height:5px;font-size:8px;color:#000;position:relative;z-index:1;}
.ln {width:7px;border-top:1px dotted #aaa;}
.leaf .ln {width:11px;margin-left:3px;}
.ck {width:9px;height:9px;margin-top:4px;}
.ti {width:12px;height:12px;margin-right:4px;}
.hl {background:#f0f0f0}
.b {font-weight:bold;color:#000;}
.vbar {flex:1;background:#f0f0f2;display:flex;flex-direction:column;align-items:center;}
.hbar {height:14px;flex:none;display:flex;align-items:center;padding:0 17px 0 4px;}
.vbar .thumb {flex:1;width:12px;background:#cdcdcd;margin:26px 0 4px;}
.hbar .thumb {height:12px;width:122px;background:#cdcdcd;margin:0 16px 0 22px;}
.chev {width:5px;height:5px;border:solid #444;border-width:1px 0 0 1px;flex:none;}
.chev.u {transform:rotate(45deg);margin-top:6px;}
.chev.d {transform:rotate(225deg);margin-bottom:6px;}
.chev.l {transform:rotate(-45deg)}
.chev.r {transform:rotate(135deg)}
.hbar + .pane_hdr {margin-top:2px;height:18px;}

.props {border-collapse:collapse;table-layout:fixed;width:190px;background:#fff;}
.c_gut {width:9px}
.c_key {width:60px}
.props td, .props th {border:1px solid #aaa;padding:0 2px;height:15px;text-align:left;white-space:nowrap;overflow:hidden;}
.props th {color:#000}
.props td.gut {border-width:0 1px 0 0;padding:0;}
.props td.ro {background:#e6e5e1}
.side::after {content:"";flex:1;background:#fff;}

/* graphics toolbar */
.tools {display:flex;align-items:center;height:22px;flex:none;padding:1px 0 0 8px;}
.tools button {width:19px;height:19px;justify-content:center;flex:none;border:1px solid transparent;}
.tools button.sel {border-color:#62a4e0;background:#dfe9f6;}
.tools button.txt {width:auto;gap:2px;}
.tools .grip_v {margin-right:5px}
.tools .mid {margin:0 2px}
.sep {width:1px;height:15px;background:#ccc;margin:0 1px;}
.t_select {padding:0 6px 0 4px}
.tools .t_mode {margin-right:5px}
.tools .t_clip {margin-left:2px}
.t_empty {padding:0 5px 0 10px}
.tools .t_ext {margin-left:4px}
.tools .t_by {margin-left:8px}
.tools .t_conv {margin-left:8px}
.tools .over {margin:10px 0 0 7px;border-top-color:#111;}

.view {flex:1;position:relative;background:#fff;min-height:0;}
.view h1 {position:absolute;left:12px;top:12px;margin:0;font-size:10px;line-height:14px;color:#000;}
.scene {display:block;width:100%;height:100%;}
.scale {font-size:9px;text-anchor:middle;fill:#000;}
```
